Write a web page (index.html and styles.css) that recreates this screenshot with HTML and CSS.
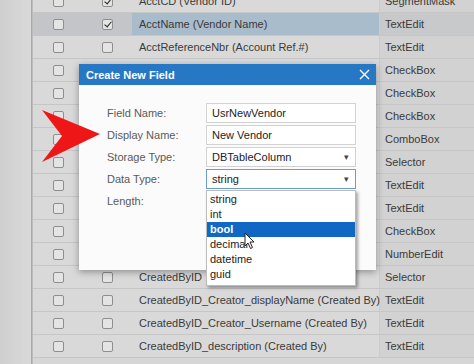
FILE: index.html
```html
<!DOCTYPE html>
<html lang="en">
<head>
  <meta charset="UTF-8">
  <title>Create New Field</title>
  <link rel="stylesheet" href="styles.css">
</head>
<body>
  <div class="screen">
    <div class="side"></div>

    <div class="grid">
      <div class="row"><span class="c1"><i class="cb"></i></span><span class="c2"><i class="cb on"></i></span><span class="c3">AcctCD (Vendor ID)</span><span class="c4">SegmentMask</span></div>
      <div class="row sel"><span class="c1"><i class="cb"></i></span><span class="c2"><i class="cb on"></i></span><span class="c3">AcctName (Vendor Name)</span><span class="c4">TextEdit</span></div>
      <div class="row"><span class="c1"><i class="cb"></i></span><span class="c2"><i class="cb"></i></span><span class="c3">AcctReferenceNbr (Account Ref.#)</span><span class="c4">TextEdit</span></div>
      <div class="row"><span class="c1"><i class="cb"></i></span><span class="c2"></span><span class="c3"></span><span class="c4">CheckBox</span></div>
      <div class="row"><span class="c1"><i class="cb"></i></span><span class="c2"></span><span class="c3"></span><span class="c4">CheckBox</span></div>
      <div class="row"><span class="c1"><i class="cb"></i></span><span class="c2"></span><span class="c3"></span><span class="c4">CheckBox</span></div>
      <div class="row"><span class="c1"><i class="cb"></i></span><span class="c2"></span><span class="c3"></span><span class="c4">ComboBox</span></div>
      <div class="row"><span class="c1"><i class="cb"></i></span><span class="c2"></span><span class="c3"></span><span class="c4">Selector</span></div>
      <div class="row"><span class="c1"><i class="cb"></i></span><span class="c2"></span><span class="c3"></span><span class="c4">TextEdit</span></div>
      <div class="row"><span class="c1"><i class="cb"></i></span><span class="c2"></span><span class="c3"></span><span class="c4">TextEdit</span></div>
      <div class="row"><span class="c1"><i class="cb"></i></span><span class="c2"></span><span class="c3"></span><span class="c4">CheckBox</span></div>
      <div class="row"><span class="c1"><i class="cb"></i></span><span class="c2"></span><span class="c3"></span><span class="c4">NumberEdit</span></div>
      <div class="row"><span class="c1"><i class="cb"></i></span><span class="c2"><i class="cb"></i></span><span class="c3">CreatedByID</span><span class="c4">Selector</span></div>
      <div class="row"><span class="c1"><i class="cb"></i></span><span class="c2"><i class="cb"></i></span><span class="c3">CreatedByID_Creator_displayName (Created By)</span><span class="c4">TextEdit</span></div>
      <div class="row"><span class="c1"><i class="cb"></i></span><span class="c2"><i class="cb"></i></span><span class="c3">CreatedByID_Creator_Username (Created By)</span><span class="c4">TextEdit</span></div>
      <div class="row"><span class="c1"><i class="cb"></i></span><span class="c2"><i class="cb"></i></span><span class="c3">CreatedByID_description (Created By)</span><span class="c4">TextEdit</span></div>
    </div>

    <div class="dialog">
      <div class="dialog-title">
        <span>Create New Field</span>
        <svg class="close" width="11" height="11" viewBox="0 0 11 11"><path d="M1 1 L10 10 M10 1 L1 10" stroke="#fff" stroke-width="1.4"/></svg>
      </div>
      <div class="dialog-body">
        <div class="field"><label>Field Name:</label><div class="input">UsrNewVendor</div></div>
        <div class="field"><label>Display Name:</label><div class="input">New Vendor</div></div>
        <div class="field"><label>Storage Type:</label><div class="input select">DBTableColumn<span class="caret">▾</span></div></div>
        <div class="field"><label>Data Type:</label><div class="input select focus">string<span class="caret">▾</span></div></div>
        <div class="field"><label>Length:</label></div>
      </div>
    </div>

    <ul class="options">
      <li>string</li>
      <li>int</li>
      <li class="hl">bool</li>
      <li>decimal</li>
      <li>datetime</li>
      <li>guid</li>
    </ul>

    <svg class="pointer" width="80" height="70" viewBox="0 0 80 70">
      <polygon points="4,4 62,28 4,56 24,30" fill="#ee1616"/>
    </svg>

    <svg class="cursor" width="12" height="18" viewBox="0 0 12 18">
      <path d="M1 1 L1 14 L4 11 L6.5 16.5 L8.5 15.5 L6 10 L10 10 Z" fill="#fff" stroke="#222" stroke-width="1"/>
    </svg>
  </div>
</body>
</html>
```

FILE: styles.css
```css
* {
  margin: 0;
  padding: 0;
  box-sizing: border-box;
}

body {
  width: 474px;
  height: 364px;
  overflow: hidden;
  background: #d6d6d6;
  font-family: 'Liberation Sans', Arial, sans-serif;
  font-size: 11px;
  color: #3a3a3a;
}

.screen {
  position: relative;
  width: 474px;
  height: 364px;
  display: flex;
  overflow: hidden;
}

.side {
  width: 32px;
  flex: none;
  background: linear-gradient(to right, #cfcfcf, #d9d9d9);
  border-right: 1px solid #a9a9a9;
}

.grid {
  flex: 1;
  margin-top: -10px;
  border-left: 1px solid #bdbdbd;
}

.row {
  display: flex;
  height: 23px;
  border-bottom: 1px solid #c6c6c6;
  background: #d9d9d9;
}

.row span {
  display: flex;
  align-items: center;
}

.c1 {
  width: 50px;
  justify-content: center;
}

.c2 {
  width: 49px;
  justify-content: center;
}

.c3 {
  width: 248px;
  padding-left: 7px;
  white-space: nowrap;
  border-right: 1px solid #cbcbcb;
}

.c4 {
  flex: 1;
  padding-left: 5px;
  background: #d2d2d2;
}

.row.sel {
  background: #c3c5c9;
}

.row.sel .c3 {
  background: #a9bccc;
}

.row.sel .c4 {
  background: #c8c9cb;
}

.cb {
  display: block;
  width: 11px;
  height: 11px;
  border: 1px solid #8e8e8e;
  border-radius: 2px;
  background: #e4e4e4;
  position: relative;
}

.cb.on::after {
  content: '';
  position: absolute;
  left: 3px;
  top: 0px;
  width: 3px;
  height: 6px;
  border: solid #222;
  border-width: 0 1.5px 1.5px 0;
  transform: rotate(40deg);
}

.dialog {
  position: absolute;
  left: 79px;
  top: 64px;
  width: 297px;
  height: 206px;
  background: #fbfbfb;
  box-shadow: 0 2px 7px rgba(0,0,0,0.35);
}

.dialog-title {
  height: 21px;
  background: #2677c4;
  color: #fff;
  font-weight: bold;
  font-size: 11px;
  display: flex;
  align-items: center;
  justify-content: space-between;
  padding: 0 6px 0 7px;
}

.dialog-body {
  padding: 18px 0 0 28px;
  display: flex;
  flex-direction: column;
  gap: 2px;
}

.field {
  display: flex;
  align-items: center;
  height: 20px;
}

.field label {
  width: 99px;
  color: #5a5a5a;
}

.input {
  width: 150px;
  height: 20px;
  border: 1px solid #d2d2d2;
  background: #fff;
  color: #222;
  padding-left: 5px;
  display: flex;
  align-items: center;
}

.input.select {
  justify-content: space-between;
  padding-right: 6px;
}

.input.focus {
  border-color: #6a9fcc;
}

.caret {
  font-size: 9px;
  color: #444;
}

.options {
  position: absolute;
  left: 206px;
  top: 190px;
  width: 150px;
  list-style: none;
  background: #fff;
  border: 1px solid #bcbcbc;
  box-shadow: 2px 2px 3px rgba(0,0,0,0.35);
  padding: 1px 0 3px;
  color: #222;
}

.options li {
  height: 15px;
  line-height: 15px;
  padding-left: 3px;
}

.options li.hl {
  background: #1167c4;
  color: #fff;
  font-weight: bold;
}

.pointer {
  position: absolute;
  left: 38px;
  top: 106px;
}

.cursor {
  position: absolute;
  left: 244px;
  top: 232px;
}
```
